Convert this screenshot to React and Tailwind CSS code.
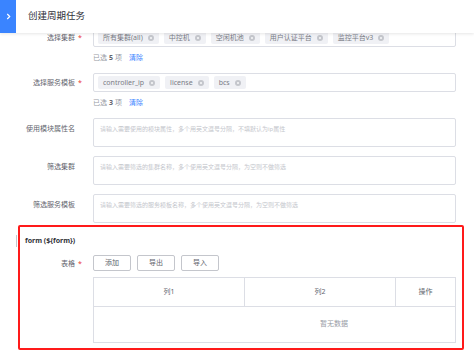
import React from 'react'

const font = { fontFamily: '"Noto Sans", "Noto Sans CJK SC", sans-serif' }

const Tag = ({ children }) => (
    <span className="flex h-[13px] items-center gap-[5px] rounded-[2px] bg-[#f0f1f5] px-[5px] text-[7px] leading-none text-[#7a7c85]">
        {children}
        <span className="flex h-[6px] w-[6px] items-center justify-center rounded-full bg-[#c4c6cc]">
            <svg viewBox="0 0 6 6" className="h-[4px] w-[4px]">
                <path d="M1.5 1.5 L4.5 4.5 M4.5 1.5 L1.5 4.5" stroke="white" strokeWidth="1" />
            </svg>
        </span>
    </span>
)

const Label = ({ text, required, top }) => (
    <div className={`flex w-[93px] shrink-0 justify-end pr-[18px] text-[7px] text-[#63656e] ${top ? 'items-start pt-[6px]' : 'items-center'}`}>
        <span className="relative leading-[9px]">
            {text}
            {required && <span className="absolute left-full top-0 ml-[3px] text-[#ea3636]">*</span>}
        </span>
    </div>
)

const Selected = ({ count }) => (
    <div className="flex h-[22px] items-center pl-[93px] text-[7px] text-[#979ba5]">
        已选 <span className="mx-[2px] font-bold text-[#63656e]">{count}</span> 项
        <span className="ml-[7px] text-[#3a84ff]">清除</span>
    </div>
)

const TextRow = ({ label, placeholder }) => (
    <div className="flex">
        <Label text={label} top />
        <div className="h-[29px] w-[363px] rounded-[2px] border border-[#dcdee5] px-[6px] pt-[6px] text-[6px] leading-[8px] text-[#c4c6cc]">
            {placeholder}
        </div>
    </div>
)

export default function App() {
    return (
        <div className="relative h-[351px] w-[474px] overflow-hidden bg-white" style={font}>
            {/* Header */}
            <div className="absolute left-0 right-0 top-0 z-10 flex h-[33px] items-center bg-white shadow-[0_1px_3px_rgba(0,0,0,0.1)]">
                <div className="flex h-full w-[16px] items-center justify-center bg-[#3a84ff]">
                    <svg viewBox="0 0 6 8" className="h-[7px] w-[5px]">
                        <path d="M1.5 1 L4.5 4 L1.5 7" stroke="white" strokeWidth="1.4" fill="none" />
                    </svg>
                </div>
                <span className="ml-[12px] text-[9.5px] text-[#313238]">创建周期任务</span>
            </div>

            <div className="pt-[28px]">
                <div className="flex">
                    <Label text="选择集群" required />
                    <div className="flex h-[19px] w-[363px] items-center gap-[5px] rounded-[2px] border border-[#dcdee5] px-[4px]">
                        <Tag>所有集群(all)</Tag>
                        <Tag>中控机</Tag>
                        <Tag>空闲机池</Tag>
                        <Tag>用户认证平台</Tag>
                        <Tag>监控平台v3</Tag>
                    </div>
                </div>
                <Selected count={5} />

                <div className="mt-[4px] flex">
                    <Label text="选择服务模板" required />
                    <div className="flex h-[19px] w-[363px] items-center gap-[5px] rounded-[2px] border border-[#dcdee5] px-[4px]">
                        <Tag>controller_ip</Tag>
                        <Tag>license</Tag>
                        <Tag>bcs</Tag>
                    </div>
                </div>
                <Selected count={3} />

                <div className="mt-[4px] flex flex-col gap-[9px]">
                    <TextRow label="使用模块属性名" placeholder="请输入需要使用的模块属性，多个用英文逗号分隔，不填默认为ip属性" />
                    <TextRow label="筛选集群" placeholder="请输入需要筛选的集群名称，多个使用英文逗号分隔，为空则不做筛选" />
                    <TextRow label="筛选服务模板" placeholder="请输入需要筛选的服务模板名称，多个使用英文逗号分隔，为空则不做筛选" />
                </div>

                {/* form group */}
                <div className="relative mt-[2px] pt-[10px]">
                    <div className="pointer-events-none absolute left-[18px] top-0 h-[125px] w-[446px] rounded-[2px] border-2 border-[#ff1a1a]"></div>
                    <div className="ml-[16px] flex h-[12px] items-center border-l border-[#c4c6cc] pl-[8px] text-[7px] font-bold text-[#313238]">
                        form (${'{form}'})
                    </div>
                    <div className="mt-[8px] flex">
                        <Label text="表格" required />
                        <div className="flex gap-[6px]">
                            {['添加', '导出', '导入'].map((t) => (
                                <button key={t} className="flex h-[16px] w-[38px] items-center justify-center rounded-[2px] border border-[#c4c6cc] bg-white text-[7px] text-[#63656e]">
                                    {t}
                                </button>
                            ))}
                        </div>
                    </div>
                    <div className="ml-[93px] mt-[6px] w-[363px] border border-[#dcdee5] text-[7px] text-[#63656e]">
                        <div className="flex h-[29px] border-b border-[#dcdee5]">
                            <div className="flex w-[151px] items-center justify-center border-r border-[#dcdee5]">列1</div>
                            <div className="flex w-[151px] items-center justify-center border-r border-[#dcdee5]">列2</div>
                            <div className="flex flex-1 items-center justify-center">操作</div>
                        </div>
                        <div className="flex h-[35px] items-center pl-[226px] text-[#979ba5]">暂无数据</div>
                    </div>
                </div>
            </div>
        </div>
    )
}
